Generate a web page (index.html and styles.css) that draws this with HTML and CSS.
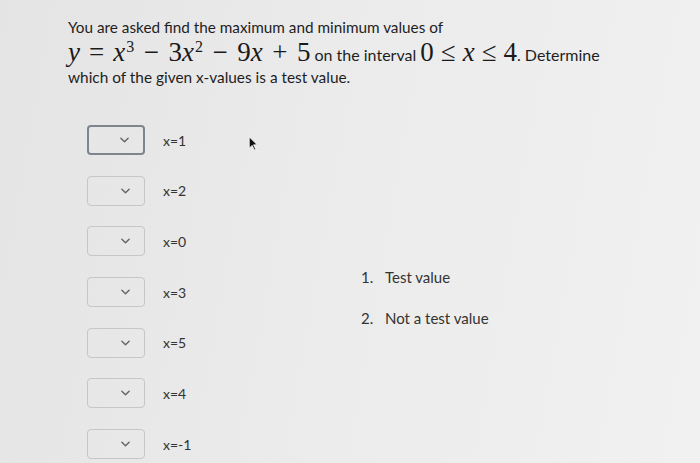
FILE: index.html
```html
<!DOCTYPE html>
<html>
<head>
<meta charset="utf-8">
<link rel="stylesheet" href="styles.css">
</head>
<body>
<div class="page">
  <div class="question">
    <div class="l1">You are asked find the maximum and minimum values of</div>
    <div class="l2"><span class="math"><i>y</i><span class="rel">=</span><i>x</i><sup>3</sup><span class="bin">−</span>3<i>x</i><sup>2</sup><span class="bin">−</span>9<i>x</i><span class="bin">+</span>5</span><span class="small"> on the interval </span><span class="math">0<span class="le">≤</span><i>x</i><span class="le">≤</span>4</span><span class="small">. Determine</span></div>
    <div class="l3">which of the given x-values is a test value.</div>
  </div>
  <div class="body">
    <div class="rows">
      <div class="row"><div class="select focus"><svg class="chev" viewBox="0 0 10 6" width="9" height="6"><polyline points="1,1 5,5 9,1"/></svg></div><span class="label">x=1</span></div>
      <div class="row"><div class="select"><svg class="chev" viewBox="0 0 10 6" width="9" height="6"><polyline points="1,1 5,5 9,1"/></svg></div><span class="label">x=2</span></div>
      <div class="row"><div class="select"><svg class="chev" viewBox="0 0 10 6" width="9" height="6"><polyline points="1,1 5,5 9,1"/></svg></div><span class="label">x=0</span></div>
      <div class="row"><div class="select"><svg class="chev" viewBox="0 0 10 6" width="9" height="6"><polyline points="1,1 5,5 9,1"/></svg></div><span class="label">x=3</span></div>
      <div class="row"><div class="select"><svg class="chev" viewBox="0 0 10 6" width="9" height="6"><polyline points="1,1 5,5 9,1"/></svg></div><span class="label">x=5</span></div>
      <div class="row"><div class="select"><svg class="chev" viewBox="0 0 10 6" width="9" height="6"><polyline points="1,1 5,5 9,1"/></svg></div><span class="label">x=4</span></div>
      <div class="row"><div class="select"><svg class="chev" viewBox="0 0 10 6" width="9" height="6"><polyline points="1,1 5,5 9,1"/></svg></div><span class="label">x=-1</span></div>
    </div>
    <ol class="options">
      <li><span class="num">1.</span>Test value</li>
      <li><span class="num">2.</span>Not a test value</li>
    </ol>
  </div>
  <svg class="cursor" viewBox="0 0 10 16" width="10" height="15"><path d="M1 1 L1 13 L4 10 L6.5 15 L8 14.3 L5.6 9.4 L9.5 9.4 Z" fill="#111" stroke="#fff" stroke-width="0.8"/></svg>
</div>
</body>
</html>
```
FILE: styles.css
```css
html, body {
  margin: 0;
  padding: 0;
}
body {
  width: 700px;
  height: 463px;
  overflow: hidden;
  background: linear-gradient(100deg, #e4e4e4 0%, #ebebeb 45%, #f1f1f1 100%);
  font-family: Lato, "Noto Sans", sans-serif;
  color: #1e1e1e;
}
.page {
  position: relative;
  height: 463px;
  padding: 17px 0 0 68px;
  box-sizing: border-box;
}
.l1 {
  font-size: 15.3px;
  line-height: 20px;
  height: 20px;
}
.l2 {
  height: 30px;
  line-height: 30px;
  white-space: nowrap;
}
.math {
  font-family: "Liberation Serif", "DejaVu Serif", serif;
  font-size: 27px;
  line-height: 30px;
  color: #1a1a1a;
}
.math i {
  font-style: italic;
}
.math sup {
  font-size: 16px;
  line-height: 0;
  vertical-align: 9px;
  margin-left: 1px;
}
.rel {
  margin: 0 9px;
}
.bin {
  margin: 0 9.5px;
}
.le {
  margin: 0 7px;
}
.small {
  font-size: 16px;
  line-height: 1;
}
.l3 {
  font-size: 15.4px;
  line-height: 20px;
}
.body {
  display: grid;
  grid-template-columns: 274px auto;
  padding-left: 19px;
  margin-top: 38px;
}
.rows {
  display: flex;
  flex-direction: column;
  gap: 20.7px;
}
.row {
  display: flex;
  align-items: center;
  height: 30px;
}
.select {
  width: 58px;
  height: 30px;
  box-sizing: border-box;
  border: 1.5px solid #c6c6c6;
  border-radius: 4px;
  display: flex;
  align-items: center;
  justify-content: flex-end;
  padding-right: 14px;
  margin-right: 18px;
}
.select.focus {
  border: 2px solid #7e858d;
}
.chev polyline {
  fill: none;
  stroke: #666;
  stroke-width: 1.6;
  stroke-linecap: round;
  stroke-linejoin: round;
}
.label {
  font-size: 14px;
  color: #333;
}
.options {
  list-style: none;
  margin: 143px 0 0 0;
  padding: 0;
  font-size: 15px;
  color: #333;
}
.options li {
  height: 18px;
  line-height: 18px;
  margin-bottom: 23px;
}
.num {
  display: inline-block;
  width: 24px;
}
.cursor {
  position: absolute;
  left: 248px;
  top: 136px;
}
```
